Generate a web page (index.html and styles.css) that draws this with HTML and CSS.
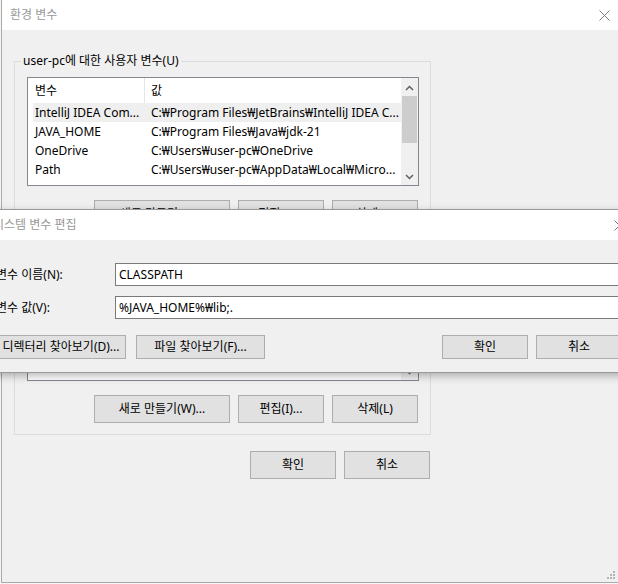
FILE: index.html
```html
<!DOCTYPE html>
<html lang="ko">
<head>
<meta charset="utf-8">
<title>환경 변수</title>
<link rel="stylesheet" href="styles.css">
</head>
<body>
<div class="win win-main">
  <div class="titlebar">
    <span class="title">환경 변수</span>
    <span class="close"><svg width="11" height="11" viewBox="0 0 11 11"><path d="M0.5 0.5L10.5 10.5M10.5 0.5L0.5 10.5" stroke="#7c7c7c" stroke-width="1" fill="none"/></svg></span>
  </div>
  <div class="main-body">
    <div class="group">
      <span class="legend">user-pc에 대한 사용자 변수(U)</span>
      <div class="listbox">
        <div class="list">
          <div class="lv-head"><span class="c1">변수</span><span class="c2">값</span></div>
          <div class="lv-row sel"><span class="c1">IntelliJ IDEA Com...</span><span class="c2">C:₩Program Files₩JetBrains₩IntelliJ IDEA C...</span></div>
          <div class="lv-row"><span class="c1">JAVA_HOME</span><span class="c2">C:₩Program Files₩Java₩jdk-21</span></div>
          <div class="lv-row"><span class="c1">OneDrive</span><span class="c2">C:₩Users₩user-pc₩OneDrive</span></div>
          <div class="lv-row"><span class="c1">Path</span><span class="c2">C:₩Users₩user-pc₩AppData₩Local₩Micro...</span></div>
        </div>
        <div class="vscroll">
          <span class="arr up"><svg width="9" height="6" viewBox="0 0 9 6"><path d="M1 5L4.5 1.5L8 5" stroke="#606060" stroke-width="1.5" fill="none"/></svg></span>
          <span class="thumb"></span>
          <span class="track"></span>
          <span class="arr down"><svg width="9" height="6" viewBox="0 0 9 6"><path d="M1 1L4.5 4.5L8 1" stroke="#606060" stroke-width="1.5" fill="none"/></svg></span>
        </div>
      </div>
      <div class="btnrow">
        <button class="btn wide">새로 만들기(N)...</button>
        <button class="btn">편집(E)...</button>
        <button class="btn">삭제(D)</button>
      </div>
    </div>
    <div class="group">
      <span class="legend">시스템 변수(S)</span>
      <div class="listbox">
        <div class="list">
          <div class="lv-head"><span class="c1">변수</span><span class="c2">값</span></div>
          <div class="lv-row"><span class="c1">CLASSPATH</span><span class="c2">%JAVA_HOME%₩lib;.</span></div>
          <div class="lv-row"><span class="c1">ComSpec</span><span class="c2">C:₩WINDOWS₩system32₩cmd.exe</span></div>
          <div class="lv-row"><span class="c1">DriverData</span><span class="c2">C:₩Windows₩System32₩Drivers₩DriverData</span></div>
          <div class="lv-row"><span class="c1">JAVA_HOME</span><span class="c2">C:₩Program Files₩Java₩jdk-21</span></div>
        </div>
        <div class="vscroll">
          <span class="arr up"><svg width="9" height="6" viewBox="0 0 9 6"><path d="M1 5L4.5 1.5L8 5" stroke="#606060" stroke-width="1.5" fill="none"/></svg></span>
          <span class="thumb"></span>
          <span class="track"></span>
          <span class="arr down"><svg width="9" height="6" viewBox="0 0 9 6"><path d="M1 1L4.5 4.5L8 1" stroke="#606060" stroke-width="1.5" fill="none"/></svg></span>
        </div>
      </div>
      <div class="btnrow">
        <button class="btn wide">새로 만들기(W)...</button>
        <button class="btn">편집(I)...</button>
        <button class="btn">삭제(L)</button>
      </div>
    </div>
    <div class="dlgbtns">
      <button class="btn">확인</button>
      <button class="btn">취소</button>
    </div>
  </div>
  <span class="grip"><svg width="10" height="10" viewBox="0 0 10 10"><g fill="#b4b4b4"><rect x="7" y="0" width="2" height="2"/><rect x="4" y="3" width="2" height="2"/><rect x="7" y="3" width="2" height="2"/><rect x="1" y="6" width="2" height="2"/><rect x="4" y="6" width="2" height="2"/><rect x="7" y="6" width="2" height="2"/></g></svg></span>
</div>

<div class="win win-edit">
  <div class="titlebar">
    <span class="title">시스템 변수 편집</span>
    <span class="close wide"><svg width="11" height="11" viewBox="0 0 11 11"><path d="M0.5 0.5L10.5 10.5M10.5 0.5L0.5 10.5" stroke="#7c7c7c" stroke-width="1" fill="none"/></svg></span>
  </div>
  <div class="edit-body">
    <div class="field">
      <label class="flabel" for="vname">변수 이름(N):</label>
      <input class="tinput" id="vname" type="text" value="CLASSPATH">
    </div>
    <div class="field">
      <label class="flabel" for="vval">변수 값(V):</label>
      <input class="tinput" id="vval" type="text" value="%JAVA_HOME%₩lib;.">
    </div>
    <div class="edit-btns">
      <div class="bgroup gap10">
        <button class="btn sm dir">디렉터리 찾아보기(D)...</button>
        <button class="btn sm file">파일 찾아보기(F)...</button>
      </div>
      <div class="bgroup gap8">
        <button class="btn sm">확인</button>
        <button class="btn sm">취소</button>
      </div>
    </div>
  </div>
</div>
</body>
</html>
```

FILE: styles.css
```css
* { box-sizing: border-box; }

html, body { margin: 0; padding: 0; }

body {
  width: 618px;
  height: 584px;
  overflow: hidden;
  position: relative;
  background: #f6f6f6;
  font: 12px/16px "Noto Sans", "Noto Sans CJK KR", sans-serif;
  color: #000;
}

.win { position: absolute; }

.win-main {
  left: 1px;
  top: 0;
  width: 618px;
  height: 583px;
  background: #f0f0f0;
  border-left: 1px solid #a9a9a9;
  border-bottom: 1px solid #a9a9a9;
  display: flex;
  flex-direction: column;
}

.titlebar {
  flex: none;
  height: 30px;
  background: #fff;
  display: flex;
  align-items: center;
}

.title {
  flex: 1;
  padding-left: 8px;
  color: #999;
  white-space: nowrap;
}

.close {
  width: 30px;
  height: 30px;
  display: flex;
  align-items: center;
  justify-content: center;
}
.close.wide { width: 46px; }

.main-body {
  flex: 1;
  padding: 31px 0 0 12px;
}

.group {
  position: relative;
  width: 417px;
  border: 1px solid #dcdcdc;
  padding: 15px 11px 11px 12px;
}
.group + .group { margin-top: 16px; }

.legend {
  position: absolute;
  left: 6px;
  top: -9px;
  padding: 0 2px;
  background: #f0f0f0;
  line-height: 16px;
  white-space: nowrap;
}

.listbox {
  height: 109px;
  border: 1px solid #828790;
  background: #fff;
  display: flex;
}

.list {
  flex: 1;
  min-width: 0;
  overflow: hidden;
}

.lv-head {
  height: 25px;
  display: flex;
}
.lv-head .c1 {
  width: 117px;
  padding-left: 7px;
  border-right: 1px solid #e5e5e5;
  display: flex;
  align-items: center;
}
.lv-head .c2 {
  padding-left: 6px;
  display: flex;
  align-items: center;
}

.lv-row {
  height: 19px;
  margin-left: 5px;
  display: flex;
  align-items: center;
  white-space: nowrap;
}
.lv-row.sel { background: #efefef; }
.lv-row .c1 {
  width: 112px;
  padding-left: 2px;
  overflow: hidden;
}
.lv-row .c2 {
  flex: 1;
  min-width: 0;
  padding-left: 6px;
  overflow: hidden;
}

.vscroll {
  flex: none;
  width: 17px;
  background: #f0f0f0;
  display: flex;
  flex-direction: column;
}
.arr {
  height: 17px;
  display: flex;
  align-items: center;
  justify-content: center;
}
.arr.up { padding-top: 3px; }
.arr.down { padding-top: 1px; }
.thumb {
  height: 47px;
  margin: 1px 1px 0;
  background: #cdcdcd;
}
.track { flex: 1; }

.btn {
  width: 86px;
  height: 28px;
  padding: 0;
  background: #e1e1e1;
  border: 1px solid #adadad;
  font: inherit;
  line-height: 16px;
  color: #000;
  display: flex;
  align-items: center;
  justify-content: center;
  white-space: nowrap;
}
.btn.wide { width: 136px; }
.btn.sm { height: 24px; }
.btn.dir { width: 130px; }
.btn.file { width: 129px; }

.btnrow {
  display: flex;
  justify-content: flex-end;
  gap: 8px;
  margin-top: 14px;
  padding-right: 1px;
}

.dlgbtns {
  width: 416px;
  display: flex;
  justify-content: flex-end;
  gap: 8px;
  margin-top: 16px;
}

.grip {
  position: absolute;
  right: 3px;
  bottom: 1px;
  width: 10px;
  height: 10px;
  display: block;
}
.grip svg { display: block; }

.win-edit {
  left: -16px;
  top: 209px;
  width: 659px;
  background: #f0f0f0;
  border: 1px solid #9a9a9a;
  box-shadow: 0 3px 8px rgba(0, 0, 0, 0.28);
}

.edit-body {
  padding: 23px 20px 13px 11px;
}

.field {
  display: grid;
  grid-template-columns: 119px 1fr;
  align-items: center;
}
.field + .field { margin-top: 10px; }

.flabel { white-space: nowrap; }

.tinput {
  height: 23px;
  width: 100%;
  margin: 0;
  padding: 0 3px;
  border: 1px solid #7a7a7a;
  background: #fff;
  font: inherit;
  color: #000;
  outline: none;
}

.edit-btns {
  display: flex;
  justify-content: space-between;
  margin-top: 16px;
}
.bgroup { display: flex; }
.gap10 { gap: 10px; }
.gap8 { gap: 8px; }
```
